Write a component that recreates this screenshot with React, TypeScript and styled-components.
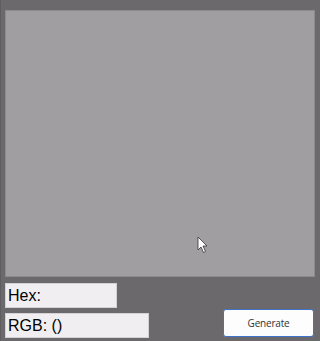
import styled, { createGlobalStyle } from 'styled-components';

const GlobalStyle = createGlobalStyle`
  html, body {
    margin: 0;
    padding: 0;
    background: #6b696c;
  }
  #root {
    height: 341px;
  }
`;

const Window = styled.div`
  box-sizing: border-box;
  height: 341px;
  width: 320px;
  padding: 10px 4px 0 5px;
  border-left: 1px solid #5f5d60;
  display: flex;
  flex-direction: column;
  font-family: 'Liberation Sans', Arial, sans-serif;
`;

const Preview = styled.div`
  box-sizing: border-box;
  height: 267px;
  width: 100%;
  margin-left: -1px;
  background: #a09ea1;
  border: 1px solid #8c8a8d;
  position: relative;
`;

const Cursor = styled.svg`
  position: absolute;
  left: 191px;
  top: 225px;
`;

const Bottom = styled.div`
  display: flex;
  justify-content: space-between;
  align-items: flex-end;
  margin-top: 6px;
  margin-left: -1px;
`;

const Fields = styled.div`
  display: flex;
  flex-direction: column;
  gap: 5px;
`;

const Field = styled.div<{ $width: number }>`
  box-sizing: border-box;
  width: ${(p) => p.$width}px;
  height: 25px;
  background: #f0eef1;
  border: 1px solid #d4d2d5;
  padding: 0 2px;
  font-size: 16px;
  line-height: 23px;
  color: #000;
`;

const Button = styled.button`
  box-sizing: border-box;
  width: 91px;
  height: 28px;
  margin: 0 2px 1px 0;
  background: #fdfdfe;
  border: 1px solid #3f72c8;
  border-radius: 3px;
  font-family: 'Open Sans', 'Liberation Sans', sans-serif;
  font-size: 10px;
  letter-spacing: -0.2px;
  color: #333;
  padding: 0;
`;

export default function App() {
  return (
    <>
      <GlobalStyle />
      <Window>
        <Preview>
          <Cursor width="12" height="18" viewBox="0 0 12 18">
            <path d="M1 1 L1 14 L4 11 L6.5 16.5 L8.5 15.5 L6 10 L10 10 Z" fill="#fff" stroke="#333" strokeWidth="0.8" />
          </Cursor>
        </Preview>
        <Bottom>
          <Fields>
            <Field $width={112}>Hex:</Field>
            <Field $width={144}>RGB: ()</Field>
          </Fields>
          <Button>Generate</Button>
        </Bottom>
      </Window>
    </>
  );
}
